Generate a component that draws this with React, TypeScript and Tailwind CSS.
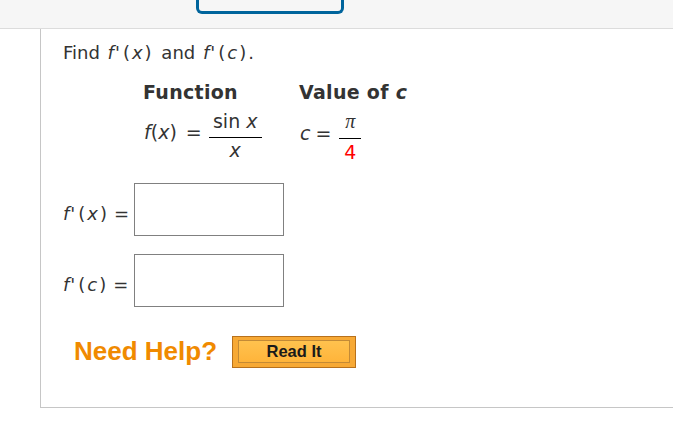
import React from "react";

const sans = { fontFamily: '"DejaVu Sans", Verdana, sans-serif' } as React.CSSProperties;

function I({ children }: { children: React.ReactNode }) {
  return <span className="italic" style={{ fontStyle: "italic" }}>{children}</span>;
}

function Frac({
  num,
  den,
  width,
  gapTop,
  gapBottom,
}: {
  num: React.ReactNode;
  den: React.ReactNode;
  width: string;
  gapTop: string;
  gapBottom: string;
}) {
  return (
    <div className={`flex flex-col items-center ${width}`}>
      <div className={`h-[20px] leading-[20px] ${gapTop}`}>{num}</div>
      <div className="h-px w-full bg-black" />
      <div className={`h-[20px] leading-[20px] ${gapBottom}`}>{den}</div>
    </div>
  );
}

function Fp({ v }: { v: string }) {
  return (
    <span className="inline-flex">
      <I>f</I>
      <span className="ml-[1px] mr-[3px] italic">'</span>
      <span>(</span>
      <span className="ml-[2px] mr-[2px]"><I>{v}</I></span>
      <span>)</span>
    </span>
  );
}

export default function App() {
  return (
    <div className="w-[673px] h-[430px] bg-white overflow-hidden text-[#333333]" style={sans}>
      <div className="h-[29px] bg-[#f6f6f6] border-b border-[#dcdcdc]">
        <div className="ml-[196px] w-[148px] h-[14px] border-[3px] border-t-0 border-[#00649c] rounded-b-[6px]" />
      </div>
      <div className="ml-[40px] h-[379px] border-l border-b border-[#c6c6c6] pl-[22px] pt-[13px]">
        <div className="text-[18px] leading-[22px]">
          Find <span className="ml-[2px] mr-[4px]"><Fp v="x" /></span> and{" "}
          <span className="ml-[2px] mr-[2px]"><Fp v="c" /></span>.
        </div>

        <div className="mt-[16px] ml-[80px] text-[19px]">
          <div className="flex font-bold leading-[24px] tracking-[0.3px]">
            <div className="w-[156px]">Function</div>
            <div>
              Value of <I>c</I>
            </div>
          </div>
          <div className="mt-[7px] flex h-[50px] items-start">
            <div className="w-[156px] flex items-start">
              <span className="mt-[11px] leading-[20px] ml-[1px]">
                <I>f</I>(<I>x</I>)
              </span>
              <span className="mt-[11px] leading-[20px] ml-[9px]">=</span>
              <div className="ml-[7px]">
                <Frac
                  width="w-[53px]"
                  gapTop="mb-[6px]"
                  gapBottom="mt-[2px]"
                  num={
                    <span>
                      sin <I>x</I>
                    </span>
                  }
                  den={<I>x</I>}
                />
              </div>
            </div>
            <div className="flex items-start">
              <span className="mt-[12px] leading-[20px] ml-[1px]">
                <I>c</I>
              </span>
              <span className="mt-[12px] leading-[20px] ml-[5px]">=</span>
              <div className="ml-[8px]">
                <Frac
                  width="w-[22px]"
                  gapTop="mb-[7px]"
                  gapBottom="mt-[3px]"
                  num={
                    <span style={{ fontFamily: '"Liberation Serif", serif', fontStyle: "italic" }} className="text-[20px]">
                      π
                    </span>
                  }
                  den={<span className="text-[#ff0000]">4</span>}
                />
              </div>
            </div>
          </div>
        </div>

        <div className="mt-[22px] flex items-start text-[18px]">
          <div className="w-[71px] mt-[20px] leading-[22px] flex">
            <Fp v="x" />
            <span className="ml-[7px]">=</span>
          </div>
          <div className="w-[150px] h-[53px] border border-[#808080] bg-white" />
        </div>
        <div className="mt-[18px] flex items-start text-[18px]">
          <div className="w-[71px] mt-[20px] leading-[22px] flex">
            <Fp v="c" />
            <span className="ml-[7px]">=</span>
          </div>
          <div className="w-[150px] h-[53px] border border-[#808080] bg-white" />
        </div>

        <div className="mt-[29px] flex items-start" style={{ fontFamily: '"Liberation Sans", Arial, sans-serif' }}>
          <span className="ml-[11px] mt-[1px] text-[26px] leading-[29px] font-bold text-[#f08a00]">
            Need Help?
          </span>
          <div className="ml-[15px] w-[124px] h-[32px] border border-[#b8711c] bg-[#f7a935] pt-[3px] pb-[4px] px-[5px]">
            <div className="h-full border border-[#c38a36] bg-gradient-to-b from-[#ffc24e] to-[#ffb43a] flex items-center justify-center text-[16.5px] font-bold text-[#1a1a1a]">
              Read It
            </div>
          </div>
        </div>
      </div>
    </div>
  );
}
